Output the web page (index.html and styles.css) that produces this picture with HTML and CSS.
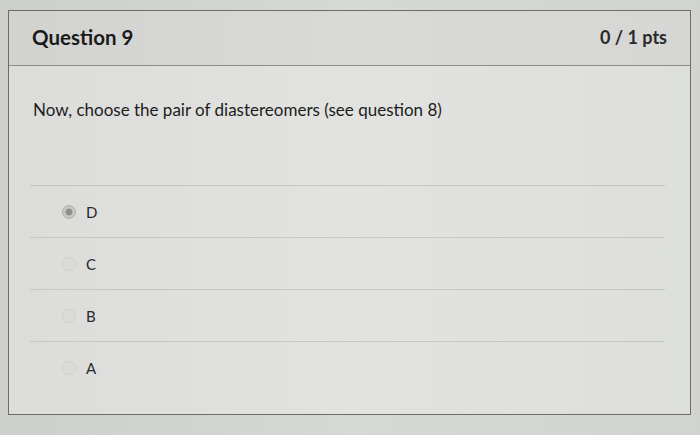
FILE: index.html
```html
<!DOCTYPE html>
<html>
<head>
<meta charset="utf-8">
<link rel="stylesheet" href="styles.css">
</head>
<body>
<div class="page">
  <div class="card">
    <div class="header">
      <div class="title">Question 9</div>
      <div class="pts">0 / 1 pts</div>
    </div>
    <div class="body">
      <p class="question">Now, choose the pair of diastereomers (see question 8)</p>
      <div class="answers">
        <div class="answer"><span class="radio selected"></span><span class="label">D</span></div>
        <div class="answer"><span class="radio"></span><span class="label">C</span></div>
        <div class="answer"><span class="radio"></span><span class="label">B</span></div>
        <div class="answer"><span class="radio"></span><span class="label">A</span></div>
      </div>
    </div>
  </div>
</div>
</body>
</html>
```
FILE: styles.css
```css
html, body {
  margin: 0;
  padding: 0;
}
body {
  width: 700px;
  height: 435px;
  overflow: hidden;
  background: linear-gradient(90deg, #cdcfcc 0%, #d6d8d5 50%, #d2d4d1 100%);
  font-family: Lato, "Open Sans", sans-serif;
  color: #2a2a2a;
}
.page {
  padding: 10px 0 0 8px;
}
.card {
  width: 683px;
  height: 405px;
  border: 1px solid #6b6c6a;
  background: linear-gradient(90deg, #dcdddb 0%, #e2e3e0 50%, #dddfdc 100%);
  box-sizing: border-box;
  display: flex;
  flex-direction: column;
}
.header {
  height: 55px;
  box-sizing: border-box;
  border-bottom: 1px solid #8c8d8b;
  background: linear-gradient(90deg, #d2d3d1 0%, #d9dad8 50%, #d6d7d5 100%);
  display: flex;
  align-items: center;
  justify-content: space-between;
  padding: 0 23px 0 23px;
}
.title {
  font-size: 20.5px;
  font-weight: 700;
  color: #1a1a1a;
  margin-bottom: 2px;
}
.pts {
  font-size: 18px;
  font-weight: 700;
  color: #2a2a2a;
  margin-bottom: 2px;
}
.body {
  padding: 0 25px 0 21px;
}
.question {
  margin: 33px 0 0 3px;
  font-size: 17px;
  line-height: 22px;
  color: #1c1c1c;
}
.answers {
  margin-top: 64px;
  border-top: 1px solid #c3c5c2;
}
.answer {
  height: 51px;
  border-bottom: 1px solid #c6c8c5;
  display: flex;
  align-items: center;
  padding-left: 32px;
}
.answer:last-child {
  border-bottom: none;
}
.radio {
  width: 14px;
  height: 14px;
  border-radius: 50%;
  border: 1px solid #cfd1ce;
  background: #dadcd9;
  box-sizing: border-box;
  margin-right: 10px;
}
.radio.selected {
  border: 1px solid #b0b1af;
  background: radial-gradient(circle, #8e8f8d 0 3.2px, #c6c7c5 3.8px);
}
.label {
  font-size: 15px;
  color: #2a2a2a;
  margin-top: 1px;
}
```
